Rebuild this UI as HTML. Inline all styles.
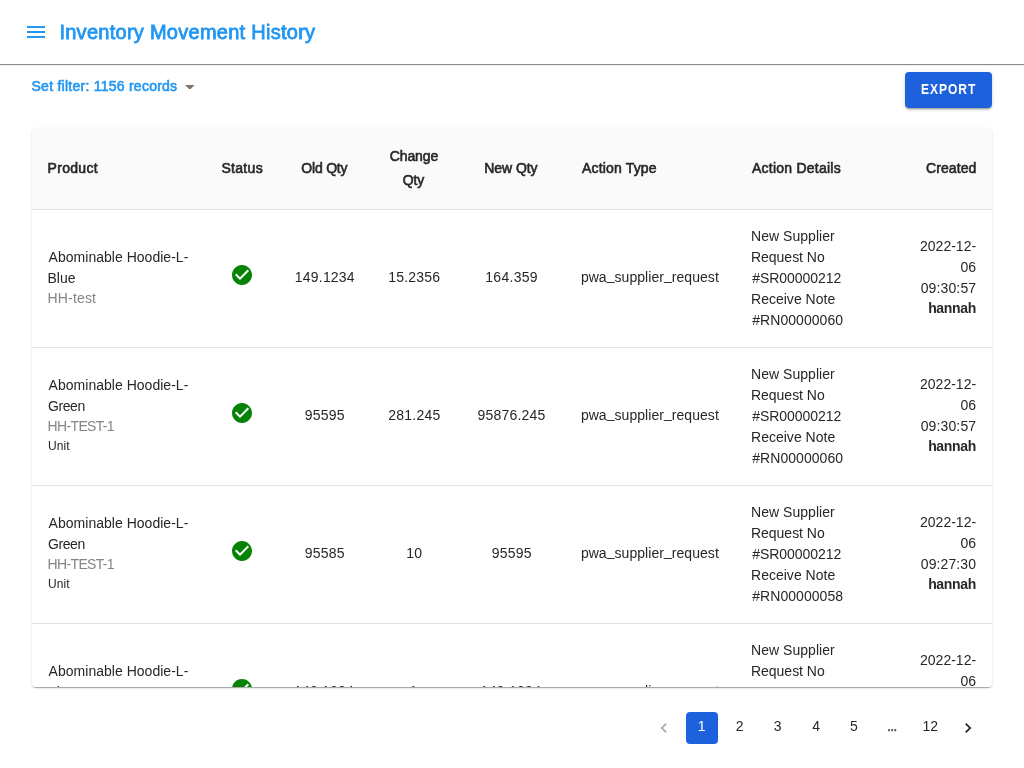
<!DOCTYPE html>
<html lang="en"><head><meta charset="utf-8"><title>Inventory Movement History</title>
<style>
html,body{margin:0;padding:0;}
body{width:1024px;height:768px;overflow:hidden;background:#fff;position:relative;font-family:"Liberation Sans",sans-serif;}
.t{position:absolute;white-space:nowrap;line-height:20px;margin:0;padding:0;}
.abs{position:absolute;}
#card{position:absolute;left:32px;top:128px;width:960.2px;height:558.5px;background:#fff;border-radius:4px;overflow:hidden;}
#cardshadow{position:absolute;left:32px;top:128px;width:960.2px;height:558.5px;border-radius:4px;box-shadow:0 2px 1px -1px rgba(0,0,0,.2),0 1px 1px 0 rgba(0,0,0,.14),0 1px 3px 0 rgba(0,0,0,.12);}
#thead{position:absolute;left:0;top:0;width:100%;height:81px;background:#fafafa;}
.hr{position:absolute;left:0;width:100%;height:1px;background:#e3e3e3;}
.u{position:relative;top:-2px;}
#page{position:absolute;left:0;top:0;width:1024px;height:768px;filter:blur(0.35px);}
</style></head><body><div id="page">

<svg class="abs" style="left:24px;top:20px" width="24" height="24" viewBox="0 0 24 24"><path fill="#2196f3" d="M3 5.900h18v2.200H3zM3 10.900h18v2.200H3zM3 15.900h18v2.200H3z"/></svg>
<div class="abs" style="left:-10px;top:64px;width:1044px;height:1px;background:#8c8c8c"></div>
<div class="abs" style="left:-10px;top:65px;width:1044px;height:1px;background:#f0f0f0"></div>
<svg class="abs" style="left:185.1px;top:84.7px" width="9.600" height="4.800" viewBox="0 0 10 5"><path fill="#757575" d="M0 0h10L5 5z"/></svg>
<div class="abs" style="left:905px;top:72px;width:87px;height:36px;border-radius:4px;background:#1d62dc;box-shadow:0 3px 1px -2px rgba(0,0,0,.2),0 2px 2px 0 rgba(0,0,0,.14),0 1px 5px 0 rgba(0,0,0,.12)"></div>
<div id="cardshadow"></div><div id="card"><div id="thead"></div>
<div class="hr" style="top:81px"></div>
<div class="hr" style="top:219px"></div>
<div class="hr" style="top:357px"></div>
<div class="hr" style="top:495px"></div>
<svg class="abs" style="left:198px;top:134.90px" width="24" height="24" viewBox="0 0 24 24"><path fill="#068306" d="M12 2C6.5 2 2 6.5 2 12s4.5 10 10 10 10-4.500 10-10S17.500 2 12 2m-2 15-5-5 1.410-1.410L10 14.170l7.590-7.590L19 8z"/></svg>
<svg class="abs" style="left:198px;top:272.90px" width="24" height="24" viewBox="0 0 24 24"><path fill="#068306" d="M12 2C6.5 2 2 6.5 2 12s4.5 10 10 10 10-4.500 10-10S17.500 2 12 2m-2 15-5-5 1.410-1.410L10 14.170l7.590-7.590L19 8z"/></svg>
<svg class="abs" style="left:198px;top:410.90px" width="24" height="24" viewBox="0 0 24 24"><path fill="#068306" d="M12 2C6.5 2 2 6.5 2 12s4.5 10 10 10 10-4.500 10-10S17.500 2 12 2m-2 15-5-5 1.410-1.410L10 14.170l7.590-7.590L19 8z"/></svg>
<svg class="abs" style="left:198px;top:548.90px" width="24" height="24" viewBox="0 0 24 24"><path fill="#068306" d="M12 2C6.5 2 2 6.5 2 12s4.5 10 10 10 10-4.500 10-10S17.500 2 12 2m-2 15-5-5 1.410-1.410L10 14.170l7.590-7.590L19 8z"/></svg>
</div>
<div class="abs" style="left:0;top:0;width:1024px;height:686.5px;overflow:hidden">
<span class="t" id="title" style="top:22.00px;font-size:20px;color:#2196f3;letter-spacing:0.269px;-webkit-text-stroke:0.8px;left:59.41px;">Inventory Movement History</span>
<span class="t" id="filter" style="top:76.00px;font-size:14px;color:#2196f3;letter-spacing:0.252px;-webkit-text-stroke:0.6px;left:31.52px;">Set filter: 1156 records</span>
<span class="t" id="export" style="top:79.00px;font-size:14px;color:#ffffff;letter-spacing:1.121px;font-weight:700;transform:scaleX(0.86);transform-origin:0 0;left:921.20px;">EXPORT</span>
<span class="t" id="h_product" style="top:158.00px;font-size:14px;color:#272727;letter-spacing:0.332px;-webkit-text-stroke:0.6px;left:47.48px;">Product</span>
<span class="t" id="h_status" style="top:158.00px;font-size:14px;color:#272727;letter-spacing:0.306px;-webkit-text-stroke:0.6px;left:221.42px;">Status</span>
<span class="t" id="h_old" style="top:158.00px;font-size:14px;color:#272727;letter-spacing:-0.213px;-webkit-text-stroke:0.6px;left:301.34px;">Old Qty</span>
<span class="t" id="h_change" style="top:146.00px;font-size:14px;color:#272727;letter-spacing:-0.106px;-webkit-text-stroke:0.6px;left:389.72px;">Change</span>
<span class="t" id="h_qty" style="top:170.00px;font-size:14px;color:#272727;letter-spacing:-0.120px;-webkit-text-stroke:0.6px;left:402.65px;">Qty</span>
<span class="t" id="h_new" style="top:158.00px;font-size:14px;color:#272727;letter-spacing:-0.054px;-webkit-text-stroke:0.6px;left:484.22px;">New Qty</span>
<span class="t" id="h_atype" style="top:158.00px;font-size:14px;color:#272727;letter-spacing:0.157px;-webkit-text-stroke:0.6px;left:582.06px;">Action Type</span>
<span class="t" id="h_adet" style="top:158.00px;font-size:14px;color:#272727;letter-spacing:0.238px;-webkit-text-stroke:0.6px;left:752.01px;">Action Details</span>
<span class="t" id="h_created" style="top:158.00px;font-size:14px;color:#272727;letter-spacing:0.097px;-webkit-text-stroke:0.6px;left:926.01px;">Created</span>
<span class="t" id="r0_p0" style="top:247.00px;font-size:14px;color:#272727;letter-spacing:0.023px;left:48.59px;">Abominable Hoodie-L-</span>
<span class="t" id="r0_p1" style="top:268.00px;font-size:14px;color:#272727;letter-spacing:0.018px;left:47.53px;">Blue</span>
<span class="t" id="r0_p2" style="top:288.00px;font-size:14px;color:#858585;letter-spacing:0.146px;left:47.60px;">HH-test</span>
<span class="t" id="r0_old" style="top:267.00px;font-size:14px;color:#272727;letter-spacing:0.192px;left:294.86px;">149.1234</span>
<span class="t" id="r0_chg" style="top:267.00px;font-size:14px;color:#272727;letter-spacing:0.171px;left:388.32px;">15.2356</span>
<span class="t" id="r0_new" style="top:267.00px;font-size:14px;color:#272727;letter-spacing:0.281px;left:485.27px;">164.359</span>
<span class="t" id="r0_at" style="top:267.00px;font-size:14px;color:#272727;letter-spacing:0.047px;left:580.88px;">pwa<span class="u">_</span>supplier<span class="u">_</span>request</span>
<span class="t" id="r0_ad0" style="top:226.00px;font-size:14px;color:#272727;letter-spacing:0.039px;left:751.00px;">New Supplier</span>
<span class="t" id="r0_ad1" style="top:247.00px;font-size:14px;color:#272727;letter-spacing:-0.024px;left:751.00px;">Request No</span>
<span class="t" id="r0_ad2" style="top:268.00px;font-size:14px;color:#272727;letter-spacing:-0.050px;left:752.27px;">#SR00000212</span>
<span class="t" id="r0_ad3" style="top:289.00px;font-size:14px;color:#272727;letter-spacing:0.015px;left:751.00px;">Receive Note</span>
<span class="t" id="r0_ad4" style="top:310.00px;font-size:14px;color:#272727;letter-spacing:0.044px;left:752.27px;">#RN00000060</span>
<span class="t" id="r0_c0" style="top:236.00px;font-size:14px;color:#272727;letter-spacing:0.015px;left:919.99px;">2022-12-</span>
<span class="t" id="r0_c1" style="top:257.00px;font-size:14px;color:#272727;left:676.07px;width:300px;text-align:right;">06</span>
<span class="t" id="r0_c2" style="top:278.00px;font-size:14px;color:#272727;letter-spacing:0.129px;left:920.69px;">09:30:57</span>
<span class="t" id="r0_c3" style="top:298.00px;font-size:14px;color:#272727;letter-spacing:-0.319px;font-weight:700;left:928.14px;">hannah</span>
<span class="t" id="r1_p0" style="top:375.00px;font-size:14px;color:#272727;letter-spacing:0.023px;left:48.59px;">Abominable Hoodie-L-</span>
<span class="t" id="r1_p1" style="top:396.00px;font-size:14px;color:#272727;letter-spacing:-0.448px;left:48.06px;">Green</span>
<span class="t" id="r1_p2" style="top:416.00px;font-size:14px;color:#858585;letter-spacing:-0.660px;left:47.60px;">HH-TEST-1</span>
<span class="t" id="r1_p3" style="top:436.00px;font-size:12px;color:#272727;letter-spacing:0.161px;left:47.89px;">Unit</span>
<span class="t" id="r1_old" style="top:405.00px;font-size:14px;color:#272727;letter-spacing:0.220px;left:174.66px;width:300px;text-align:center;">95595</span>
<span class="t" id="r1_chg" style="top:405.00px;font-size:14px;color:#272727;letter-spacing:0.220px;left:264.39px;width:300px;text-align:center;">281.245</span>
<span class="t" id="r1_new" style="top:405.00px;font-size:14px;color:#272727;letter-spacing:0.220px;left:361.57px;width:300px;text-align:center;">95876.245</span>
<span class="t" id="r1_at" style="top:405.00px;font-size:14px;color:#272727;letter-spacing:0.047px;left:580.88px;">pwa<span class="u">_</span>supplier<span class="u">_</span>request</span>
<span class="t" id="r1_ad0" style="top:364.00px;font-size:14px;color:#272727;letter-spacing:0.039px;left:751.00px;">New Supplier</span>
<span class="t" id="r1_ad1" style="top:385.00px;font-size:14px;color:#272727;letter-spacing:-0.024px;left:751.00px;">Request No</span>
<span class="t" id="r1_ad2" style="top:406.00px;font-size:14px;color:#272727;letter-spacing:-0.050px;left:752.27px;">#SR00000212</span>
<span class="t" id="r1_ad3" style="top:427.00px;font-size:14px;color:#272727;letter-spacing:0.015px;left:751.00px;">Receive Note</span>
<span class="t" id="r1_ad4" style="top:448.00px;font-size:14px;color:#272727;letter-spacing:0.044px;left:752.27px;">#RN00000060</span>
<span class="t" id="r1_c0" style="top:374.00px;font-size:14px;color:#272727;letter-spacing:0.015px;left:919.99px;">2022-12-</span>
<span class="t" id="r1_c1" style="top:395.00px;font-size:14px;color:#272727;left:676.07px;width:300px;text-align:right;">06</span>
<span class="t" id="r1_c2" style="top:416.00px;font-size:14px;color:#272727;letter-spacing:0.129px;left:920.69px;">09:30:57</span>
<span class="t" id="r1_c3" style="top:436.00px;font-size:14px;color:#272727;letter-spacing:-0.319px;font-weight:700;left:928.14px;">hannah</span>
<span class="t" id="r2_p0" style="top:513.00px;font-size:14px;color:#272727;letter-spacing:0.023px;left:48.59px;">Abominable Hoodie-L-</span>
<span class="t" id="r2_p1" style="top:534.00px;font-size:14px;color:#272727;letter-spacing:-0.448px;left:48.06px;">Green</span>
<span class="t" id="r2_p2" style="top:554.00px;font-size:14px;color:#858585;letter-spacing:-0.660px;left:47.60px;">HH-TEST-1</span>
<span class="t" id="r2_p3" style="top:574.00px;font-size:12px;color:#272727;letter-spacing:0.161px;left:47.89px;">Unit</span>
<span class="t" id="r2_old" style="top:543.00px;font-size:14px;color:#272727;letter-spacing:0.220px;left:174.66px;width:300px;text-align:center;">95585</span>
<span class="t" id="r2_chg" style="top:543.00px;font-size:14px;color:#272727;letter-spacing:0.220px;left:264.31px;width:300px;text-align:center;">10</span>
<span class="t" id="r2_new" style="top:543.00px;font-size:14px;color:#272727;letter-spacing:0.220px;left:361.65px;width:300px;text-align:center;">95595</span>
<span class="t" id="r2_at" style="top:543.00px;font-size:14px;color:#272727;letter-spacing:0.047px;left:580.88px;">pwa<span class="u">_</span>supplier<span class="u">_</span>request</span>
<span class="t" id="r2_ad0" style="top:502.00px;font-size:14px;color:#272727;letter-spacing:0.039px;left:751.00px;">New Supplier</span>
<span class="t" id="r2_ad1" style="top:523.00px;font-size:14px;color:#272727;letter-spacing:-0.024px;left:751.00px;">Request No</span>
<span class="t" id="r2_ad2" style="top:544.00px;font-size:14px;color:#272727;letter-spacing:-0.050px;left:752.27px;">#SR00000212</span>
<span class="t" id="r2_ad3" style="top:565.00px;font-size:14px;color:#272727;letter-spacing:0.015px;left:751.00px;">Receive Note</span>
<span class="t" id="r2_ad4" style="top:586.00px;font-size:14px;color:#272727;letter-spacing:0.045px;left:752.27px;">#RN00000058</span>
<span class="t" id="r2_c0" style="top:512.00px;font-size:14px;color:#272727;letter-spacing:0.015px;left:919.99px;">2022-12-</span>
<span class="t" id="r2_c1" style="top:533.00px;font-size:14px;color:#272727;left:676.07px;width:300px;text-align:right;">06</span>
<span class="t" id="r2_c2" style="top:554.00px;font-size:14px;color:#272727;letter-spacing:0.108px;left:920.79px;">09:27:30</span>
<span class="t" id="r2_c3" style="top:574.00px;font-size:14px;color:#272727;letter-spacing:-0.319px;font-weight:700;left:928.14px;">hannah</span>
<span class="t" id="r3_p0" style="top:661.00px;font-size:14px;color:#272727;letter-spacing:0.023px;left:48.59px;">Abominable Hoodie-L-</span>
<span class="t" id="r3_p1" style="top:682.00px;font-size:14px;color:#272727;letter-spacing:0.018px;left:47.53px;">Blue</span>
<span class="t" id="r3_p2" style="top:702.00px;font-size:14px;color:#858585;letter-spacing:0.146px;left:47.60px;">HH-test</span>
<span class="t" id="r3_old" style="top:681.00px;font-size:14px;color:#272727;letter-spacing:0.192px;left:173.91px;width:300px;text-align:center;">148.1234</span>
<span class="t" id="r3_chg" style="top:681.00px;font-size:14px;color:#272727;letter-spacing:0.171px;left:263.51px;width:300px;text-align:center;">1</span>
<span class="t" id="r3_new" style="top:681.00px;font-size:14px;color:#272727;letter-spacing:0.281px;left:360.91px;width:300px;text-align:center;">149.1234</span>
<span class="t" id="r3_at" style="top:681.00px;font-size:14px;color:#272727;letter-spacing:0.047px;left:580.88px;">pwa<span class="u">_</span>supplier<span class="u">_</span>request</span>
<span class="t" id="r3_ad0" style="top:640.00px;font-size:14px;color:#272727;letter-spacing:0.039px;left:751.00px;">New Supplier</span>
<span class="t" id="r3_ad1" style="top:661.00px;font-size:14px;color:#272727;letter-spacing:-0.024px;left:751.00px;">Request No</span>
<span class="t" id="r3_ad2" style="top:682.00px;font-size:14px;color:#272727;letter-spacing:-0.050px;left:752.27px;">#SR00000212</span>
<span class="t" id="r3_ad3" style="top:703.00px;font-size:14px;color:#272727;letter-spacing:0.015px;left:751.00px;">Receive Note</span>
<span class="t" id="r3_ad4" style="top:724.00px;font-size:14px;color:#272727;letter-spacing:0.044px;left:752.27px;">#RN00000057</span>
<span class="t" id="r3_c0" style="top:650.00px;font-size:14px;color:#272727;letter-spacing:0.015px;left:919.99px;">2022-12-</span>
<span class="t" id="r3_c1" style="top:671.00px;font-size:14px;color:#272727;left:676.07px;width:300px;text-align:right;">06</span>
<span class="t" id="r3_c2" style="top:692.00px;font-size:14px;color:#272727;letter-spacing:0.129px;left:920.69px;">09:21:12</span>
<span class="t" id="r3_c3" style="top:712.00px;font-size:14px;color:#272727;letter-spacing:-0.319px;font-weight:700;left:928.14px;">hannah</span>
</div>
<div class="abs" style="left:686px;top:712px;width:32px;height:32px;border-radius:4px;background:#1d62dc"></div>
<svg class="abs" style="left:654.4px;top:718.4px" width="20" height="20" viewBox="0 0 24 24"><path fill="#a8a8a8" d="M15.410 16.580 10.830 12l4.580-4.590L14 6l-6 6 6 6z"/></svg>
<svg class="abs" style="left:957.8px;top:718.1px" width="20" height="20" viewBox="0 0 24 24"><path fill="#212121" d="M8.590 16.580 13.170 12 8.590 7.410 10 6l6 6-6 6z"/></svg>
<svg class="abs" style="left:886px;top:726px" width="12" height="8" viewBox="0 0 12 8"><g fill="#5a5a5a"><rect x="2.1" y="3.1" width="1.9" height="2.1" rx=".5"/><rect x="5.2" y="3.1" width="1.9" height="2.1" rx=".5"/><rect x="8.3" y="3.1" width="1.9" height="2.1" rx=".5"/></g></svg>
<span class="t" id="pg1" style="top:716.00px;font-size:14px;color:#ffffff;left:697.79px;">1</span>
<span class="t" id="pg2" style="top:716.00px;font-size:14px;color:#272727;left:589.76px;width:300px;text-align:center;">2</span>
<span class="t" id="pg3" style="top:716.00px;font-size:14px;color:#272727;left:627.64px;width:300px;text-align:center;">3</span>
<span class="t" id="pg4" style="top:716.00px;font-size:14px;color:#272727;left:666.10px;width:300px;text-align:center;">4</span>
<span class="t" id="pg5" style="top:716.00px;font-size:14px;color:#272727;left:703.92px;width:300px;text-align:center;">5</span>
<span class="t" id="pg12" style="top:716.00px;font-size:14px;color:#272727;left:780.24px;width:300px;text-align:center;">12</span>
</div></body></html>
